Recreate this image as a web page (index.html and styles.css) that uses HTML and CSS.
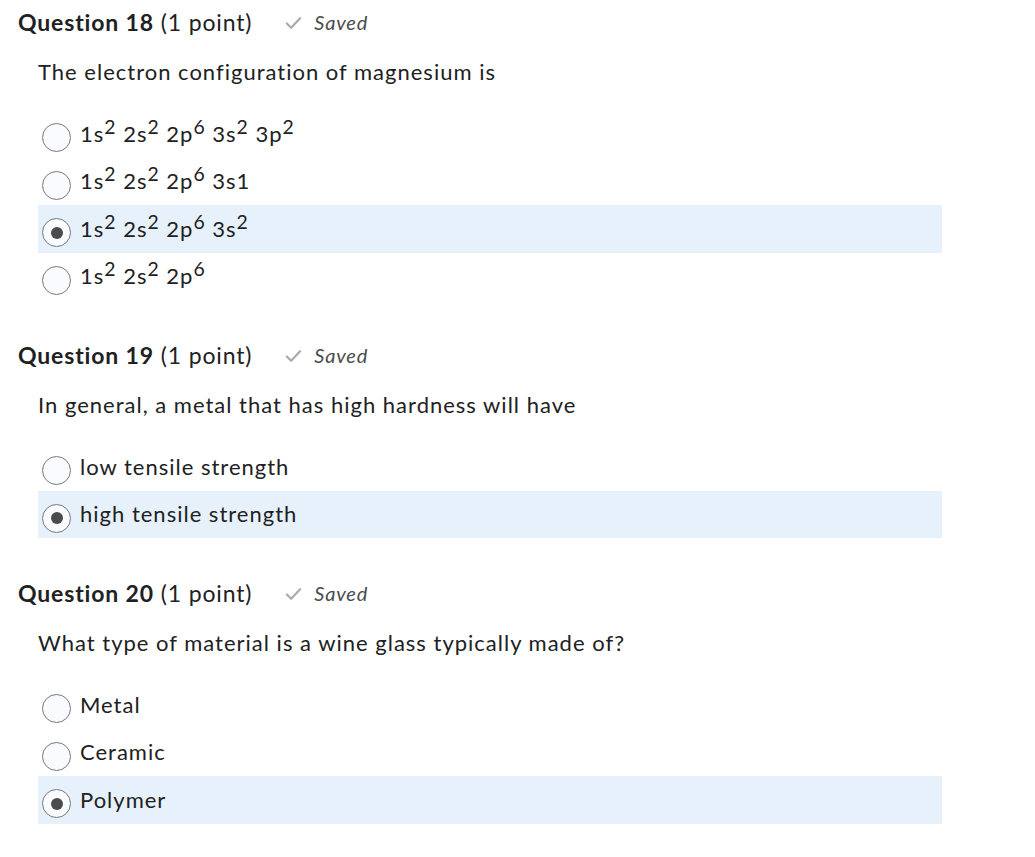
FILE: index.html
```html
<!DOCTYPE html>
<html lang="en">
<head>
<meta charset="utf-8">
<title>Quiz</title>
<link rel="stylesheet" href="styles.css">
</head>
<body>
<main class="quiz">
  <section class="question">
    <div class="q-head">
      <h2 class="q-title"><strong>Question 18</strong> (1 point)</h2>
      <span class="saved"><svg class="check" viewBox="0 0 18 14" width="17" height="14"><path d="M2 7.5 L6.5 12 L16 2" fill="none" stroke="#a9acae" stroke-width="2.4" stroke-linecap="round" stroke-linejoin="round"/></svg><em>Saved</em></span>
    </div>
    <p class="q-text">The electron configuration of magnesium is</p>
    <ul class="options">
      <li class="option"><span class="radio"></span><span class="label">1s<sup>2</sup> 2s<sup>2</sup> 2p<sup>6</sup> 3s<sup>2</sup> 3p<sup>2</sup></span></li>
      <li class="option"><span class="radio"></span><span class="label">1s<sup>2</sup> 2s<sup>2</sup> 2p<sup>6</sup> 3s1</span></li>
      <li class="option selected"><span class="radio"></span><span class="label">1s<sup>2</sup> 2s<sup>2</sup> 2p<sup>6</sup> 3s<sup>2</sup></span></li>
      <li class="option"><span class="radio"></span><span class="label">1s<sup>2</sup> 2s<sup>2</sup> 2p<sup>6</sup></span></li>
    </ul>
  </section>
  <section class="question">
    <div class="q-head">
      <h2 class="q-title"><strong>Question 19</strong> (1 point)</h2>
      <span class="saved"><svg class="check" viewBox="0 0 18 14" width="17" height="14"><path d="M2 7.5 L6.5 12 L16 2" fill="none" stroke="#a9acae" stroke-width="2.4" stroke-linecap="round" stroke-linejoin="round"/></svg><em>Saved</em></span>
    </div>
    <p class="q-text">In general, a metal that has high hardness will have</p>
    <ul class="options">
      <li class="option"><span class="radio"></span><span class="label">low tensile strength</span></li>
      <li class="option selected"><span class="radio"></span><span class="label">high tensile strength</span></li>
    </ul>
  </section>
  <section class="question">
    <div class="q-head">
      <h2 class="q-title"><strong>Question 20</strong> (1 point)</h2>
      <span class="saved"><svg class="check" viewBox="0 0 18 14" width="17" height="14"><path d="M2 7.5 L6.5 12 L16 2" fill="none" stroke="#a9acae" stroke-width="2.4" stroke-linecap="round" stroke-linejoin="round"/></svg><em>Saved</em></span>
    </div>
    <p class="q-text">What type of material is a wine glass typically made of?</p>
    <ul class="options">
      <li class="option"><span class="radio"></span><span class="label">Metal</span></li>
      <li class="option"><span class="radio"></span><span class="label">Ceramic</span></li>
      <li class="option selected"><span class="radio"></span><span class="label">Polymer</span></li>
    </ul>
  </section>
</main>
</body>
</html>
```

FILE: styles.css
```css
* { box-sizing: border-box; }
html, body { margin: 0; padding: 0; background: #ffffff; }
body {
  font-family: Lato, "Open Sans", sans-serif;
  font-variant-ligatures: none;
  color: #202122;
}
.quiz {
  padding: 7px 0 0 18px;
  width: 1035px;
}
.question { margin-bottom: 40px; }
.q-head {
  display: flex;
  align-items: center;
  height: 30px;
}
.q-title {
  margin: 0;
  font-size: 23px;
  font-weight: 400;
  line-height: 30px;
  letter-spacing: 0.85px;
  white-space: nowrap;
}
.q-title strong { font-weight: 700; }
.saved {
  display: flex;
  align-items: center;
  margin-left: 33px;
  color: #494c4e;
  font-size: 20px;
  letter-spacing: 0.8px;
}
.check { margin-right: 12px; margin-top: 1px; }
.saved em { font-style: italic; }
.q-text {
  margin: 20px 0 0 20px;
  font-size: 22px;
  line-height: 30px;
  letter-spacing: 1px;
}
.options {
  list-style: none;
  margin: 23px 0 0 20px;
  padding: 0;
  width: 904px;
}
.option {
  display: flex;
  align-items: center;
  height: 47.5px;
  padding-left: 4px;
  font-size: 22px;
  letter-spacing: 1px;
}
.option.selected { background: #e7f1fb; }
.radio {
  flex: 0 0 auto;
  width: 29px;
  height: 29px;
  border: 1px solid #75797c;
  border-radius: 50%;
  background: #f9fbff;
  margin-top: 8px;
  margin-right: 9px;
  display: flex;
  align-items: center;
  justify-content: center;
}
.selected .radio::after {
  content: "";
  width: 12px;
  height: 12px;
  border-radius: 50%;
  background: #494c4e;
}
.label { line-height: 30px; }
.label sup { font-size: 0.88em; line-height: 0; letter-spacing: 1px; }
```
